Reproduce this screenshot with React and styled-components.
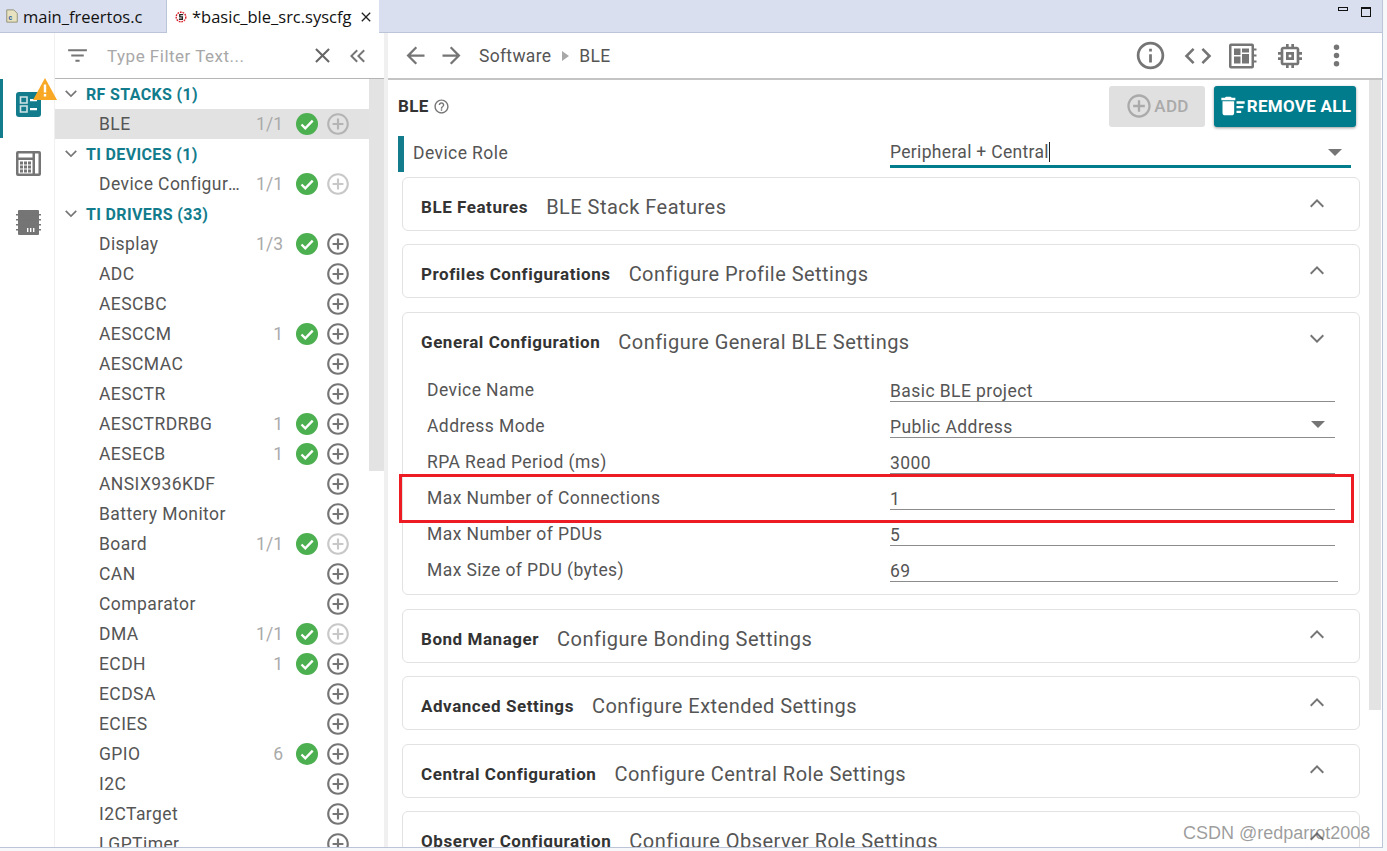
import React from "react";
import styled, { createGlobalStyle } from "styled-components";

const GlobalStyle = createGlobalStyle`
  html, body { margin: 0; height: 100%; overflow: hidden; background: #f7f8f9; }
  body { font-family: Roboto, "Liberation Sans", sans-serif; }
  * { box-sizing: border-box; }
`;

const P = {
  add: "M13 7h-2v4H7v2h4v4h2v-4h4v-2h-4V7zm-1-5C6.48 2 2 6.48 2 12s4.48 10 10 10 10-4.48 10-10S17.52 2 12 2zm0 18c-4.41 0-8-3.59-8-8s3.59-8 8-8 8 3.59 8 8-3.59 8-8 8z",
  info: "M11 7h2v2h-2zm0 4h2v6h-2zm1-9C6.48 2 2 6.48 2 12s4.48 10 10 10 10-4.48 10-10S17.52 2 12 2zm0 18c-4.41 0-8-3.59-8-8s3.59-8 8-8 8 3.59 8 8-3.59 8-8 8z",
  help: "M11 18h2v-2h-2v2zm1-16C6.48 2 2 6.48 2 12s4.48 10 10 10 10-4.48 10-10S17.52 2 12 2zm0 18c-4.41 0-8-3.59-8-8s3.59-8 8-8 8 3.59 8 8-3.59 8-8 8zm0-14c-2.21 0-4 1.79-4 4h2c0-1.1.9-2 2-2s2 .9 2 2c0 2-3 1.75-3 5h2c0-2.25 3-2.5 3-5 0-2.21-1.79-4-4-4z",
  chip: "M15 9H9v6h6V9zm-2 4h-2v-2h2v2zm8-2V9h-2V7c0-1.1-.9-2-2-2h-2V3h-2v2h-2V3H9v2H7c-1.1 0-2 .9-2 2v2H3v2h2v2H3v2h2v2c0 1.1.9 2 2 2h2v2h2v-2h2v2h2v-2h2c1.1 0 2-.9 2-2v-2h2v-2h-2v-2h2zm-4 6H7V7h10v10z",
  filter: "M10 18h4v-2h-4v2zM3 6v2h18V6H3zm3 7h12v-2H6v2z",
  back: "M20 11H7.83l5.59-5.59L12 4l-8 8 8 8 1.41-1.41L7.83 13H20v-2z",
  forward: "M4 11h12.17l-5.59-5.59L12 4l8 8-8 8-1.41-1.41L16.17 13H4v-2z",
  sweep: "M15 16h4v2h-4zm0-8h7v2h-7zm0 4h6v2h-6zM3 18c0 1.1.9 2 2 2h6c1.1 0 2-.9 2-2V8H3v10zM14 5h-3l-1-1H6L5 5H2v2h12z",
  close: "M19 6.41L17.59 5 12 10.59 6.41 5 5 6.41 10.59 12 5 17.59 6.41 19 12 13.41 17.59 19 19 17.59 13.41 12z",
  up: "M12 8l-7 7 1.41 1.41L12 10.83l5.59 5.58L19 15z",
  down: "M12 16l7-7-1.41-1.41L12 13.17 6.41 7.59 5 9z",
  collapse: "M11.5 5.5L5 12l6.5 6.5 1.4-1.4L7.8 12l5.1-5.1zM18.5 5.5L12 12l6.5 6.5 1.4-1.4-5.1-5.1 5.1-5.1z",
  code: "M9.4 16.6L4.8 12l4.6-4.6L8 6l-6 6 6 6zm5.2 0l4.6-4.6-4.6-4.6L16 6l6 6-6 6z",
  more: "M12 8a2 2 0 1 0 0-4 2 2 0 0 0 0 4zm0 2a2 2 0 1 0 0 4 2 2 0 0 0 0-4zm0 6a2 2 0 1 0 0 4 2 2 0 0 0 0-4z",
};

const Svg = styled.svg`
  display: block;
  flex: none;
  width: ${(p) => p.$size || 24}px;
  height: ${(p) => p.$size || 24}px;
  fill: ${(p) => p.$color || "#757575"};
`;

const Icon = ({ d, size, color }) => (
  <Svg viewBox="0 0 24 24" $size={size} $color={color}>
    <path d={d} />
  </Svg>
);

const CheckBadge = () => (
  <Svg viewBox="0 0 22 22" $size={22} $color="#4caf50">
    <circle cx="11" cy="11" r="11" />
    <path d="M5.5 11.5l3.8 3.8 7.4-7.6" fill="none" stroke="#fff" strokeWidth="2.4" />
  </Svg>
);

const ChecklistIcon = () => (
  <Svg viewBox="0 0 25 25" $size={25} $color="#127c8c">
    <rect width="25" height="25" rx="3" />
    <path d="M4.5 5h6.5v6H4.5zM4.5 14h6.5v6H4.5z" fill="none" stroke="#cfe3e6" strokeWidth="1.6" />
    <path d="M14 7h7v2.2h-7zM14 16h7v2.2h-7z" fill="#fff" />
  </Svg>
);

const CalcIcon = () => (
  <Svg viewBox="0 0 25 25" $size={25} $color="#757575">
    <path
      fillRule="evenodd"
      d="M2 0h21a2 2 0 0 1 2 2v21a2 2 0 0 1-2 2H2a2 2 0 0 1-2-2V2a2 2 0 0 1 2-2zm.5 2.5v4h14v-4zm0 6.5v13.5h14V9zM19 2.5v20h3.5v-20z"
    />
    <path d="M4 10.5h3v3H4zM8 10.5h3v3H8zM12 10.5h3v3h-3zM4 14.5h3v3H4zM8 14.5h3v3H8zM12 14.5h3v3h-3zM4 18.5h3v3H4zM8 18.5h3v3H8zM12 18.5h3v3h-3z" />
  </Svg>
);

const DieIcon = () => (
  <Svg viewBox="0 0 25 25" $size={25} $color="#757575">
    <path d="M3 0h19a1 1 0 0 1 1 1v23a1 1 0 0 1-1 1H3a1 1 0 0 1-1-1V1a1 1 0 0 1 1-1z" />
    <path d="M0 4h25v1.6H0zM0 9h25v1.6H0zM0 14h25v1.6H0zM0 19h25v1.6H0z" />
    <path d="M11 18h1.4v4H11zM14 18h1.4v4H14zM17 18h1.4v4H17z" fill="#fff" />
  </Svg>
);

const BoardIcon = () => (
  <Svg viewBox="0 0 28 25" $size={28} $color="#757575">
    <path
      fillRule="evenodd"
      d="M2 0h21a2 2 0 0 1 2 2v21a2 2 0 0 1-2 2H2a2 2 0 0 1-2-2V2a2 2 0 0 1 2-2zm.5 2.5v20h20v-20z"
    />
    <path d="M5 5h6.5v6.5H5zM13 5h7v4h-7zM5 13h6.5v7H5zM13 10.5h7V20h-7zM25 5h2.5v2H25zM25 11h2.5v2H25zM25 17h2.5v2H25z" />
  </Svg>
);

const Warning = styled.svg`
  position: absolute;
  top: -1px;
  left: 30px;
  width: 24px;
  height: 22px;
  z-index: 2;
`;

const Frame = styled.div`
  width: 1383px;
  height: 848px;
  display: flex;
  flex-direction: column;
  background: #fff;
  border-right: 1px solid #bcc4d8;
  border-bottom: 1px solid #bcc4d8;
  position: relative;
  overflow: hidden;
`;

const TabBar = styled.div`
  height: 33px;
  flex: none;
  display: flex;
  background: #d9dfee;
  border-bottom: 1px solid #bcc4d8;
`;

const Tab = styled.div`
  display: flex;
  align-items: center;
  height: ${(p) => (p.$active ? "33px" : "32px")};
  width: ${(p) => (p.$active ? "212px" : "167px")};
  padding-left: ${(p) => (p.$active ? "7px" : "5px")};
  background: ${(p) => (p.$active ? "#fff" : "transparent")};
  border-right: ${(p) => (p.$active ? "none" : "1px solid #bcc4d8")};
  font-family: "Open Sans", "Noto Sans", sans-serif;
  font-size: 16.5px;
  color: #111;
  white-space: nowrap;
`;

const TabLabel = styled.span`
  margin-left: 4px;
`;

const TabClose = styled.span`
  margin-left: 6px;
`;

const WindowButtons = styled.div`
  margin-left: auto;
  display: flex;
  align-items: flex-start;
  gap: 13px;
  padding: 7px 11px 0 0;
`;

const MinBox = styled.span`
  width: 10px;
  height: 4px;
  border: 1px solid #111;
`;

const MaxBox = styled.span`
  width: 10px;
  height: 10px;
  border: 1px solid #111;
  border-top-width: 2px;
`;

const Main = styled.div`
  flex: 1;
  min-height: 0;
  display: flex;
`;

const Rail = styled.div`
  width: 54px;
  flex: none;
  padding-top: 46px;
  position: relative;
`;

const RailItem = styled.div`
  height: 59px;
  display: flex;
  align-items: center;
  padding-left: ${(p) => (p.$active ? "13px" : "16px")};
  padding-bottom: 8px;
  border-left: ${(p) => (p.$active ? "3px solid #127c8c" : "none")};
  position: relative;
`;

const Sidebar = styled.div`
  width: 330px;
  flex: none;
  display: flex;
  flex-direction: column;
  border-left: 1px solid #f0f0f0;
`;

const FilterBar = styled.div`
  height: 46px;
  flex: none;
  display: flex;
  align-items: center;
  padding-left: 10px;
  border-bottom: 1px solid #b5b5b5;
`;

const FilterText = styled.span`
  margin-left: 17px;
  width: 197px;
  font-size: 17px;
  color: #a8a8a8;
  letter-spacing: 0.5px;
`;

const FilterAction = styled.span`
  margin-left: ${(p) => p.$gap}px;
`;

const SideBody = styled.div`
  flex: 1;
  min-height: 0;
  display: flex;
`;

const List = styled.div`
  width: 314px;
  flex: none;
  overflow: hidden;
`;

const SectionRow = styled.div`
  height: 30px;
  display: flex;
  align-items: center;
  padding-left: 6px;
  gap: 5px;
  font-size: 16px;
  font-weight: 700;
  letter-spacing: 0.35px;
  color: #127c8c;
`;

const ItemRow = styled.div`
  height: 30px;
  display: flex;
  align-items: center;
  padding-left: 44px;
  background: ${(p) => (p.$selected ? "#e2e2e2" : "transparent")};
  color: #555;
  font-size: 17.5px;
  letter-spacing: 0.42px;
`;

const ItemName = styled.span`
  width: 142px;
  flex: none;
  white-space: nowrap;
  overflow: hidden;
  text-overflow: ellipsis;
`;

const ItemCount = styled.span`
  width: 42px;
  flex: none;
  text-align: right;
  color: #aaa;
  font-size: 17.5px;
  letter-spacing: 0;
`;

const Slot = styled.span`
  display: flex;
  justify-content: center;
  align-items: center;
  width: 22px;
  height: 22px;
  margin-left: ${(p) => p.$gap}px;
`;

const ScrollTrack = styled.div`
  flex: none;
  width: ${(p) => p.$width}px;
`;

const Thumb = styled.div`
  height: ${(p) => p.$height}px;
  background: #e3e3e3;
`;

const Divider = styled.div`
  width: 4px;
  flex: none;
  background: #f0f0f0;
`;

const Content = styled.div`
  flex: 1;
  min-width: 0;
  display: flex;
  flex-direction: column;
`;

const Toolbar = styled.div`
  height: 47px;
  flex: none;
  display: flex;
  align-items: center;
  padding-left: 14px;
  border-bottom: 2px solid #c4c4c4;
`;

const Crumb = styled.span`
  font-size: 17.5px;
  color: #555;
  letter-spacing: 0.3px;
`;

const CrumbArrow = styled.span`
  width: 0;
  height: 0;
  margin: 1px 10px 0 11px;
  border-left: 7px solid #a8a8a8;
  border-top: 5px solid transparent;
  border-bottom: 5px solid transparent;
`;

const ToolSpacer = styled.span`
  margin-left: ${(p) => p.$gap}px;
`;

const ToolIcons = styled.div`
  margin-left: auto;
  display: flex;
  align-items: center;
  padding-right: 27px;
`;

const ToolIcon = styled.span`
  width: ${(p) => p.$width || 46}px;
  display: flex;
  justify-content: center;
`;

const ContentBody = styled.div`
  flex: 1;
  min-height: 0;
  display: flex;
`;

const Pane = styled.div`
  width: 981px;
  flex: none;
  overflow: hidden;
  padding: 6px 9px 0 10px;
`;

const TitleRow = styled.div`
  display: flex;
  align-items: center;
  height: 41px;
  padding-right: 4px;
`;

const Title = styled.span`
  font-size: 17px;
  font-weight: 700;
  letter-spacing: 0.3px;
  color: #333;
  margin: -2px 4px 0 0;
`;

const Action = styled.button`
  height: 41px;
  display: flex;
  align-items: center;
  gap: ${(p) => (p.$primary ? 0 : 1)}px;
  border: none;
  border-radius: 3px;
  padding: 0 0 2px;
  width: ${(p) => p.$width}px;
  justify-content: center;
  margin-left: ${(p) => (p.$auto ? "auto" : "9px")};
  font-family: inherit;
  font-size: 17px;
  letter-spacing: 0.3px;
  font-weight: ${(p) => (p.$primary ? 700 : 500)};
  color: ${(p) => (p.$primary ? "#fff" : "#aaa")};
  background: ${(p) => (p.$primary ? "#007c8c" : "#e0e0e0")};
  box-shadow: ${(p) => (p.$primary ? "0 1px 3px rgba(0,0,0,.4)" : "none")};
`;

const RoleRow = styled.div`
  height: 36px;
  margin: 9px 0 5px;
  display: flex;
  border-left: 6px solid #127c8c;
  padding-left: 9px;
  color: #555;
  font-size: 17.5px;
  letter-spacing: 0.42px;
  align-items: center;
`;

const RoleLabel = styled.span`
  width: 477px;
  margin-top: -3px;
`;

const RoleInput = styled.div`
  width: 461px;
  height: 29px;
  margin-top: -1px;
  display: flex;
  align-items: center;
  border-bottom: 3px solid #007c8c;
  padding-right: 9px;
`;

const Caret = styled.span`
  border-right: 1px solid #222;
  letter-spacing: 0.32px;
`;

const DropArrow = styled.span`
  margin-left: auto;
  width: 0;
  height: 0;
  border-top: 7px solid #757575;
  border-left: 7px solid transparent;
  border-right: 7px solid transparent;
`;

const Cards = styled.div`
  display: flex;
  flex-direction: column;
  gap: 13.4px;
  padding-left: 4px;
`;

const Card = styled.section`
  flex: none;
  border: 1px solid #e2e2e2;
  border-radius: 6px;
  background: #fff;
`;

const CardHead = styled.div`
  height: 52px;
  display: flex;
  align-items: center;
  padding: 6px 30px 0 18px;
`;

const CardTitle = styled.span`
  font-size: 17px;
  font-weight: 700;
  letter-spacing: 0.55px;
  color: #333;
  margin-right: 18px;
`;

const CardDesc = styled.span`
  font-size: 20px;
  color: #555;
  letter-spacing: 0.47px;
`;

const CardChevron = styled.span`
  margin-left: auto;
  margin-top: ${(p) => (p.$open ? -5 : -9)}px;
`;

const CardBody = styled.div`
  padding: 6px 0 7.6px 24px;
`;

const FieldRow = styled.div`
  height: 36px;
  display: flex;
  color: #555;
  font-size: 17.5px;
  letter-spacing: 0.42px;
`;

const FieldLabel = styled.span`
  width: 463px;
  padding-top: 9px;
`;

const FieldValue = styled.div`
  width: ${(p) => p.$width || 445}px;
  height: 31px;
  display: flex;
  align-items: flex-end;
  line-height: 19px;
  border-bottom: 1px solid #8c8c8c;
`;

const FieldCaret = styled.span`
  margin: 0 10px 9px auto;
  width: 0;
  height: 0;
  border-top: 7px solid #757575;
  border-left: 7px solid transparent;
  border-right: 7px solid transparent;
`;

const Highlight = styled.div`
  position: absolute;
  left: 399px;
  top: 474px;
  width: 955px;
  height: 49px;
  border: 3px solid #ed1c24;
  pointer-events: none;
`;

const Watermark = styled.div`
  position: absolute;
  left: 1183px;
  top: 823px;
  font-family: "Liberation Sans", Arial, sans-serif;
  font-size: 18px;
  color: rgba(90, 90, 90, 0.6);
  white-space: nowrap;
`;

const sections = [
  { name: "RF STACKS (1)", items: [{ name: "BLE", count: "1/1", ok: true, off: true, selected: true }] },
  { name: "TI DEVICES (1)", items: [{ name: "Device Configuration", count: "1/1", ok: true, off: true, light: true }] },
  {
    name: "TI DRIVERS (33)",
    items: [
      { name: "Display", count: "1/3", ok: true },
      { name: "ADC" },
      { name: "AESCBC" },
      { name: "AESCCM", count: "1", ok: true },
      { name: "AESCMAC" },
      { name: "AESCTR" },
      { name: "AESCTRDRBG", count: "1", ok: true },
      { name: "AESECB", count: "1", ok: true },
      { name: "ANSIX936KDF" },
      { name: "Battery Monitor" },
      { name: "Board", count: "1/1", ok: true, off: true, light: true },
      { name: "CAN" },
      { name: "Comparator" },
      { name: "DMA", count: "1/1", ok: true, off: true, light: true },
      { name: "ECDH", count: "1", ok: true },
      { name: "ECDSA" },
      { name: "ECIES" },
      { name: "GPIO", count: "6", ok: true },
      { name: "I2C" },
      { name: "I2CTarget" },
      { name: "LGPTimer" },
    ],
  },
];

const collapsedTop = [
  ["BLE Features", "BLE Stack Features"],
  ["Profiles Configurations", "Configure Profile Settings"],
];

const collapsedBottom = [
  ["Bond Manager", "Configure Bonding Settings"],
  ["Advanced Settings", "Configure Extended Settings"],
  ["Central Configuration", "Configure Central Role Settings"],
  ["Observer Configuration", "Configure Observer Role Settings"],
];

const fields = [
  { label: "Device Name", value: "Basic BLE project" },
  { label: "Address Mode", value: "Public Address", select: true },
  { label: "RPA Read Period (ms)", value: "3000" },
  { label: "Max Number of Connections", value: "1" },
  { label: "Max Number of PDUs", value: "5" },
  { label: "Max Size of PDU (bytes)", value: "69", width: 448 },
];

const CollapsedCard = ({ title, desc }) => (
  <Card>
    <CardHead>
      <CardTitle>{title}</CardTitle>
      <CardDesc>{desc}</CardDesc>
      <CardChevron>
        <Icon d={P.up} />
      </CardChevron>
    </CardHead>
  </Card>
);

export default function App() {
  return (
    <>
      <GlobalStyle />
      <Frame>
        <TabBar>
          <Tab>
            <Svg viewBox="0 0 14 16" $size={14} $color="#e8e2c0">
              <path d="M1 1h8l4 4v10H1z" stroke="#8a8a70" strokeWidth="1" />
              <text x="3" y="12" fontSize="8" fontWeight="700" fill="#2a5d9c" fontFamily="Roboto">c</text>
            </Svg>
            <TabLabel>main_freertos.c</TabLabel>
          </Tab>
          <Tab $active>
            <Svg viewBox="0 0 14 16" $size={14} $color="none">
              <circle cx="7" cy="8" r="5.5" stroke="#d8202a" strokeWidth="1.6" strokeDasharray="2 1" />
              <path d="M9.5 5.2H5.6v2.6h3v2.8H4.6" stroke="#222" strokeWidth="1.5" />
            </Svg>
            <TabLabel>*basic_ble_src.syscfg</TabLabel>
            <TabClose>
              <Icon d={P.close} size={16} color="#222" />
            </TabClose>
          </Tab>
          <WindowButtons>
            <MinBox />
            <MaxBox />
          </WindowButtons>
        </TabBar>
        <Main>
          <Rail>
            <RailItem $active>
              <Warning viewBox="0 0 24 22">
                <path d="M12 0l12 22H0z" fill="#f9a825" />
                <path d="M10.8 6.5h2.4v8h-2.4zM10.8 16h2.4v2.6h-2.4z" fill="#fff" />
              </Warning>
              <ChecklistIcon />
            </RailItem>
            <RailItem>
              <CalcIcon />
            </RailItem>
            <RailItem>
              <DieIcon />
            </RailItem>
          </Rail>
          <Sidebar>
            <FilterBar>
              <Icon d={P.filter} size={25} />
              <FilterText>Type Filter Text...</FilterText>
              <FilterAction $gap={6}>
                <Icon d={P.close} size={25} color="#666" />
              </FilterAction>
              <FilterAction $gap={10}>
                <Icon d={P.collapse} size={24} />
              </FilterAction>
            </FilterBar>
            <SideBody>
              <List>
                {sections.map((s) => (
                  <React.Fragment key={s.name}>
                    <SectionRow>
                      <Icon d={P.down} size={20} />
                      {s.name}
                    </SectionRow>
                    {s.items.map((it) => (
                      <ItemRow key={it.name} $selected={it.selected}>
                        <ItemName>{it.name}</ItemName>
                        <ItemCount>{it.count}</ItemCount>
                        <Slot $gap={13}>{it.ok && <CheckBadge />}</Slot>
                        <Slot $gap={9}>
                          <Icon
                            d={P.add}
                            size={26}
                            color={it.light ? "#c8c8c8" : it.off ? "#b4b4b4" : "#757575"}
                          />
                        </Slot>
                      </ItemRow>
                    ))}
                  </React.Fragment>
                ))}
              </List>
              <ScrollTrack $width={15}>
                <Thumb $height={392} />
              </ScrollTrack>
            </SideBody>
          </Sidebar>
          <Divider />
          <Content>
            <Toolbar>
              <Icon d={P.back} size={27} />
              <ToolSpacer $gap={9} />
              <Icon d={P.forward} size={27} />
              <ToolSpacer $gap={14} />
              <Crumb>Software</Crumb>
              <CrumbArrow />
              <Crumb>BLE</Crumb>
              <ToolIcons>
                <ToolIcon>
                  <Icon d={P.info} size={33} />
                </ToolIcon>
                <ToolIcon $width={50}>
                  <Icon d={P.code} size={32} />
                </ToolIcon>
                <ToolIcon $width={40}>
                  <BoardIcon />
                </ToolIcon>
                <ToolIcon $width={54}>
                  <Icon d={P.chip} size={32} />
                </ToolIcon>
                <ToolIcon $width={38}>
                  <Icon d={P.more} size={33} />
                </ToolIcon>
              </ToolIcons>
            </Toolbar>
            <ContentBody>
              <Pane>
                <TitleRow>
                  <Title>BLE</Title>
                  <Icon d={P.help} size={17} />
                  <Action $auto $width={96}>
                    <Icon d={P.add} size={28} color="#aaa" />
                    ADD
                  </Action>
                  <Action $primary $width={142}>
                    <Icon d={P.sweep} size={28} color="#fff" />
                    REMOVE ALL
                  </Action>
                </TitleRow>
                <RoleRow>
                  <RoleLabel>Device Role</RoleLabel>
                  <RoleInput>
                    <Caret>Peripheral + Central</Caret>
                    <DropArrow />
                  </RoleInput>
                </RoleRow>
                <Cards>
                  {collapsedTop.map(([title, desc]) => (
                    <CollapsedCard key={title} title={title} desc={desc} />
                  ))}
                  <Card>
                    <CardHead>
                      <CardTitle>General Configuration</CardTitle>
                      <CardDesc>Configure General BLE Settings</CardDesc>
                      <CardChevron $open>
                        <Icon d={P.down} />
                      </CardChevron>
                    </CardHead>
                    <CardBody>
                      {fields.map((f) => (
                        <FieldRow key={f.label}>
                          <FieldLabel>{f.label}</FieldLabel>
                          <FieldValue $width={f.width}>
                            {f.value}
                            {f.select && <FieldCaret />}
                          </FieldValue>
                        </FieldRow>
                      ))}
                    </CardBody>
                  </Card>
                  {collapsedBottom.map(([title, desc]) => (
                    <CollapsedCard key={title} title={title} desc={desc} />
                  ))}
                </Cards>
              </Pane>
              <ScrollTrack $width={12}>
                <Thumb $height={630} />
              </ScrollTrack>
            </ContentBody>
          </Content>
        </Main>
        <Highlight />
        <Watermark>CSDN @redparrot2008</Watermark>
      </Frame>
    </>
  );
}
